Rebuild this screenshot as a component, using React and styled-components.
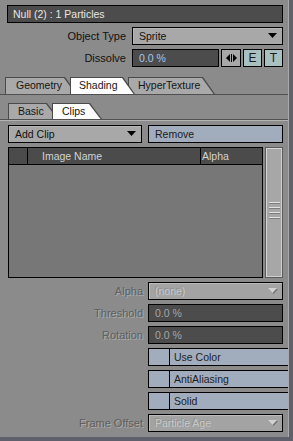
import React from 'react';
import styled, { createGlobalStyle } from 'styled-components';

const Global = createGlobalStyle`
  html, body { margin: 0; padding: 0; background: #60606c; }
  body { font-family: "Liberation Sans", Arial, sans-serif; }
`;

const Frame = styled.div`
  width: 293px;
  height: 441px;
  background: #60606c;
  overflow: hidden;
`;

const Panel = styled.div`
  width: 289px;
  height: 437px;
  box-sizing: border-box;
  background: #8b8b8b;
  border-right: 1px solid #a9a9a9;
  padding: 5px 5px 0 7px;
  display: flex;
  flex-direction: column;
  overflow: hidden;
  font-size: 11px;
  color: #111;
`;

const TitleBar = styled.div`
  height: 18px;
  box-sizing: border-box;
  background: #4c4c4c;
  border: 1px solid #000;
  color: #e6e6e6;
  font-size: 10.5px;
  line-height: 16px;
  padding-left: 5px;
`;

const FieldRow = styled.div`
  display: grid;
  grid-template-columns: ${(p) => p.$label}px 1fr;
  column-gap: ${(p) => p.$gap}px;
  height: 18px;
  margin-top: ${(p) => p.$top ?? 4}px;
  margin-right: ${(p) => p.$bleed ? -6 : 0}px;
`;

const Label = styled.div`
  text-align: right;
  line-height: 18px;
  white-space: nowrap;
  font-size: 11px;
  color: ${(p) => (p.$disabled ? '#5e5e5e' : '#111')};
  text-shadow: ${(p) => (p.$disabled ? '1px 1px 0 #adadad' : 'none')};
`;

const Dropdown = styled.div`
  box-sizing: border-box;
  height: 18px;
  border: 1px solid #000;
  background: ${(p) => (p.$disabled ? '#a3a3a3' : '#a8a8a8')};
  box-shadow: inset 1px 1px 0 ${(p) => (p.$disabled ? '#bcbcbc' : '#b6b6b6')};
  display: flex;
  align-items: center;
  justify-content: space-between;
  padding: 0 4px 0 6px;
  font-size: 10.5px;
  color: ${(p) => (p.$disabled ? '#c9c9c9' : '#111')};
  text-shadow: ${(p) => (p.$disabled ? '-1px -1px 0 #8f8f8f' : 'none')};
`;

const ValueBox = styled.div`
  box-sizing: border-box;
  height: 18px;
  border: 1px solid #000;
  background: #4c4c4c;
  padding-left: 6px;
  line-height: 16px;
  font-size: 10.5px;
  color: ${(p) => (p.$disabled ? '#a6a6a6' : '#a9c6ea')};
  flex: 1;
`;

const Controls = styled.div`
  display: flex;
  gap: 2px;
`;

const SquareButton = styled.div`
  box-sizing: border-box;
  width: ${(p) => p.$w}px;
  height: 18px;
  border: 1px solid #000;
  background: ${(p) => p.$bg};
  display: flex;
  align-items: center;
  justify-content: center;
  font-size: 12px;
  color: #1c1c1c;
`;

const TabBar = styled.div`
  display: flex;
  align-items: flex-end;
  box-sizing: border-box;
  height: ${(p) => p.$h + 1}px;
  margin: ${(p) => p.$top}px -6px 0 -7px;
  padding-left: ${(p) => p.$pad}px;
  border-bottom: 1px solid #505050;
  box-shadow: ${(p) => (p.$light ? '0 1px 0 #b3b3b3' : 'none')};
`;

const Tab = styled.div`
  position: relative;
  box-sizing: border-box;
  width: ${(p) => p.$w}px;
  height: ${(p) => p.$h}px;
  margin-left: ${(p) => (p.$first ? 0 : -7)}px;
  padding-left: ${(p) => p.$pl}px;
  line-height: ${(p) => p.$h}px;
  font-size: 10.5px;
  color: #151515;
  z-index: ${(p) => (p.$active ? 3 : 1)};
  white-space: nowrap;

  &::before,
  &::after {
    content: '';
    position: absolute;
    z-index: -1;
  }
  &::before {
    inset: 0;
    background: #4a4a4a;
    clip-path: polygon(0 0, calc(100% - 12px) 0, 100% 100%, 0 100%);
  }
  &::after {
    top: 1px;
    left: 1px;
    right: 0;
    bottom: 0;
    background: ${(p) => (p.$active ? '#ffffff' : '#a9a9a9')};
    clip-path: polygon(0 0, calc(100% - 13px) 0, calc(100% - 1.5px) 100%, 0 100%);
  }
`;

const TabText = styled.span`
  position: relative;
  z-index: 1;
`;

const ClipRow = styled.div`
  display: grid;
  grid-template-columns: 134px 1fr;
  column-gap: 6px;
  height: 18px;
  margin: 5px 0 0 1px;
`;

const Button = styled.div`
  box-sizing: border-box;
  height: 18px;
  border: 1px solid #000;
  background: #a1adbd;
  padding-left: 6px;
  line-height: 17px;
  font-size: 10.5px;
  color: #1a1a1a;
`;

const ListArea = styled.div`
  display: grid;
  grid-template-columns: 255px 18px;
  column-gap: 2px;
  height: 131px;
  margin: 4px 0 0 1px;
`;

const List = styled.div`
  box-sizing: border-box;
  border: 1px solid #000;
  background: #777777;
  display: flex;
  flex-direction: column;
`;

const ListHeader = styled.div`
  display: grid;
  grid-template-columns: 18px 173px 1fr;
  height: 17px;
  box-sizing: border-box;
  border-bottom: 1px solid #000;
  background: #4b4b4b;
  color: #d2d2d2;
  font-size: 10.5px;
  line-height: 16px;
`;

const HeaderCell = styled.div`
  border-left: ${(p) => (p.$first ? 'none' : '1px solid #000')};
  padding-left: ${(p) => p.$pl}px;
  white-space: nowrap;
  overflow: hidden;
`;

const Scrollbar = styled.div`
  box-sizing: border-box;
  border: 1px solid #5c5c5c;
  background: #a7a7a7;
  box-shadow: inset 1px 1px 0 #d6d6d6, inset -1px -1px 0 #d0d0d0;
  display: flex;
  flex-direction: column;
  align-items: center;
  padding-top: 54px;
  gap: 4px;
`;

const Grip = styled.div`
  width: 11px;
  height: 1px;
  background: #e2e2e2;
  box-shadow: 0 1px 0 #7e7e7e;
`;

const CheckBar = styled.div`
  box-sizing: border-box;
  height: 18px;
  border: 1px solid #000;
  border-right: none;
  background: #a1adbd;
  display: flex;
`;

const CheckBox = styled.div`
  width: 20px;
  border-right: 1px solid #000;
  flex: none;
`;

const CheckLabel = styled.div`
  padding-left: 4px;
  line-height: 16px;
  font-size: 10.5px;
  color: #1e1e1e;
`;

const Caret = ({ disabled }) => (
  <svg width="10" height="6" viewBox="0 0 10 6">
    {disabled ? (
      <>
        <polygon points="1,1 10,1 5.5,6" fill="#6f6f6f" />
        <polygon points="0,0 9,0 4.5,5" fill="#d2d2d2" />
      </>
    ) : (
      <polygon points="0,0 9,0 4.5,5" fill="#000" />
    )}
  </svg>
);

const SlideIcon = () => (
  <svg width="11" height="8" viewBox="0 0 11 8">
    <polygon points="0,4 4,0 4,8" fill="#000" />
    <rect x="5" y="0" width="1" height="8" fill="#000" />
    <polygon points="7,0 11,4 7,8" fill="#000" />
  </svg>
);

export default function App() {
  return (
    <Frame>
      <Global />
      <Panel>
        <TitleBar>Null (2) : 1 Particles</TitleBar>

        <FieldRow $label={119} $gap={6}>
          <Label>Object Type</Label>
          <Dropdown>
            <span>Sprite</span>
            <Caret />
          </Dropdown>
        </FieldRow>

        <FieldRow $label={119} $gap={6}>
          <Label>Dissolve</Label>
          <Controls>
            <ValueBox>0.0 %</ValueBox>
            <SquareButton $w={20} $bg="#a8a8a8">
              <SlideIcon />
            </SquareButton>
            <SquareButton $w={19} $bg="#a8c0c0">E</SquareButton>
            <SquareButton $w={19} $bg="#a8c0c0">T</SquareButton>
          </Controls>
        </FieldRow>

        <TabBar $top={10} $pad={5} $h={17}>
          <Tab $first $w={72} $h={17} $pl={11}>
            <TabText>Geometry</TabText>
          </Tab>
          <Tab $active $w={65} $h={17} $pl={9}>
            <TabText>Shading</TabText>
          </Tab>
          <Tab $w={87} $h={17} $pl={10}>
            <TabText>HyperTexture</TabText>
          </Tab>
        </TabBar>

        <TabBar $top={8} $pad={8} $h={16} $light>
          <Tab $first $w={51} $h={16} $pl={10}>
            <TabText>Basic</TabText>
          </Tab>
          <Tab $active $w={50} $h={16} $pl={10}>
            <TabText>Clips</TabText>
          </Tab>
        </TabBar>

        <ClipRow>
          <Dropdown>
            <span>Add Clip</span>
            <Caret />
          </Dropdown>
          <Button>Remove</Button>
        </ClipRow>

        <ListArea>
          <List>
            <ListHeader>
              <HeaderCell $first $pl={0} />
              <HeaderCell $pl={14}>Image Name</HeaderCell>
              <HeaderCell $pl={1}>Alpha</HeaderCell>
            </ListHeader>
          </List>
          <Scrollbar>
            <Grip />
            <Grip />
            <Grip />
            <Grip />
          </Scrollbar>
        </ListArea>

        <FieldRow $label={136} $gap={5}>
          <Label $disabled>Alpha</Label>
          <Dropdown $disabled>
            <span>(none)</span>
            <Caret disabled />
          </Dropdown>
        </FieldRow>

        <FieldRow $label={136} $gap={5}>
          <Label $disabled>Threshold</Label>
          <ValueBox $disabled>0.0 %</ValueBox>
        </FieldRow>

        <FieldRow $label={136} $gap={5}>
          <Label $disabled>Rotation</Label>
          <ValueBox $disabled>0.0 %</ValueBox>
        </FieldRow>

        {['Use Color', 'AntiAliasing', 'Solid'].map((t) => (
          <FieldRow key={t} $label={136} $gap={5} $bleed>
            <span />
            <CheckBar>
              <CheckBox />
              <CheckLabel>{t}</CheckLabel>
            </CheckBar>
          </FieldRow>
        ))}

        <FieldRow $label={136} $gap={5}>
          <Label $disabled>Frame Offset</Label>
          <Dropdown $disabled>
            <span>Particle Age</span>
            <Caret disabled />
          </Dropdown>
        </FieldRow>
      </Panel>
    </Frame>
  );
}
